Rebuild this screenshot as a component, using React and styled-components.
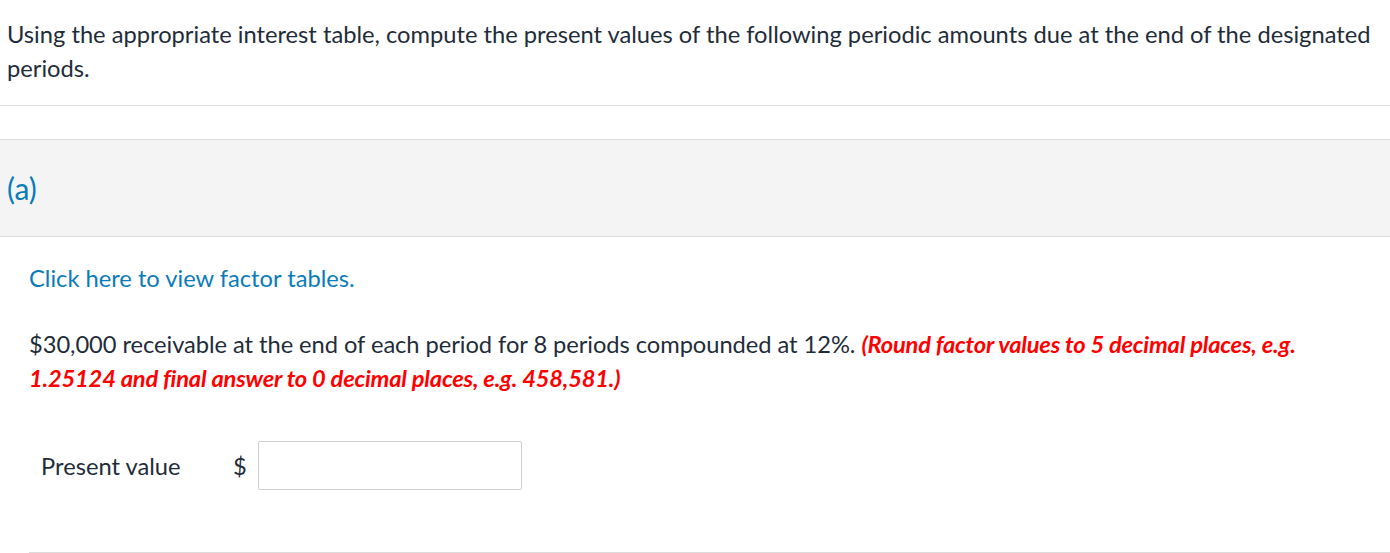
import React from "react";
import styled, { createGlobalStyle } from "styled-components";

const Global = createGlobalStyle`
  html, body { margin: 0; padding: 0; background: #fff; }
  body { font-family: Lato, "Open Sans", sans-serif; color: #1f2d3a; }
`;

const Page = styled.div`
  width: 1390px;
`;

const Intro = styled.p`
  margin: 0;
  padding: 17px 0 0 7px;
  font-size: 23.7px;
  line-height: 34px;
  height: 88px;
  border-bottom: 1px solid #dcdcdc;
`;

const Spacer = styled.div`
  height: 33px;
`;

const PartHeader = styled.div`
  background: #f4f4f4;
  border-top: 1px solid #dcdcdc;
  border-bottom: 1px solid #dcdcdc;
  height: 96px;
  display: flex;
  align-items: center;
  padding-left: 7px;
  font-size: 30px;
  color: #0a7cb8;
`;

const Body = styled.div`
  padding: 24px 0 0 29px;
`;

const Link = styled.a`
  display: block;
  color: #0a7cb8;
  font-size: 23.7px;
  line-height: 34px;
  text-decoration: none;
`;

const Question = styled.p`
  margin: 32px 0 0;
  max-width: 1300px;
  font-size: 23.7px;
  line-height: 34px;
  letter-spacing: -0.05px;
`;

const Hint = styled.span`
  color: #ff0000;
  font-weight: 700;
  font-style: italic;
  letter-spacing: -0.2px;
`;

const AnswerRow = styled.div`
  display: flex;
  align-items: center;
  margin-top: 46px;
  padding-left: 12px;
  font-size: 23.7px;
`;

const Label = styled.span`
  width: 192px;
`;

const Currency = styled.span`
  width: 25px;
`;

const Input = styled.input`
  width: 264px;
  height: 49px;
  box-sizing: border-box;
  border: 1px solid #cfcfcf;
  border-radius: 2px;
  font-family: inherit;
  font-size: 20px;
  padding: 0 8px;
  outline: none;
`;

const Divider = styled.div`
  margin-top: 62px;
  border-bottom: 1px solid #dcdcdc;
`;

export default function App() {
  return (
    <Page>
      <Global />
      <Intro>
        Using the appropriate interest table, compute the present values of the following periodic amounts due at the end of the designated periods.
      </Intro>
      <Spacer />
      <PartHeader>(a)</PartHeader>
      <Body>
        <Link href="#">Click here to view factor tables.</Link>
        <Question>
          $30,000 receivable at the end of each period for 8 periods compounded at 12%.{" "}
          <Hint>
            (Round factor values to 5 decimal places, e.g. 1.25124 and final answer to 0 decimal places, e.g. 458,581.)
          </Hint>
        </Question>
        <AnswerRow>
          <Label>Present value</Label>
          <Currency>$</Currency>
          <Input type="text" />
        </AnswerRow>
        <Divider />
      </Body>
    </Page>
  );
}
